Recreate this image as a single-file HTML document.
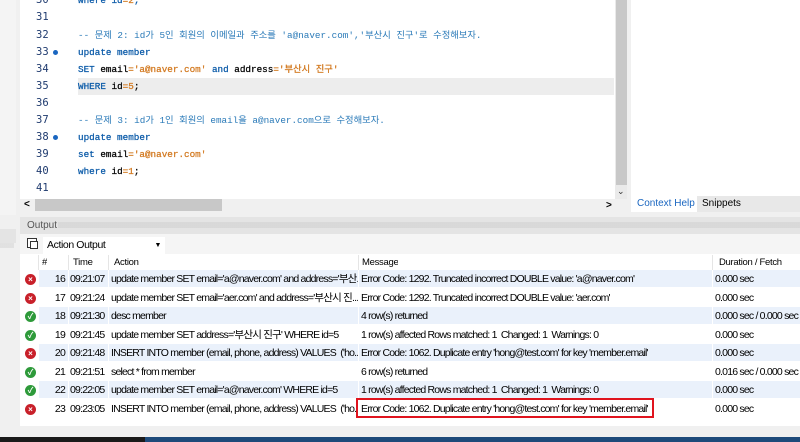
<!DOCTYPE html>
<html><head><meta charset="utf-8"><style>
*{margin:0;padding:0;box-sizing:border-box}
body{width:800px;height:442px;overflow:hidden;background:#f0f0f0;position:relative;font-family:"Liberation Sans","Noto Sans CJK KR",sans-serif;font-size:11px;color:#000}
.a{position:absolute}
.code{font-family:"Liberation Mono","Noto Sans CJK KR",monospace;font-size:9.3px;line-height:17px;height:17px;white-space:pre;-webkit-text-stroke:0.25px currentColor}
.ln{position:absolute;left:36px;color:#1e3a6e;font-family:"DejaVu Sans Mono",monospace;font-size:10.5px;line-height:17px}
.kw{color:#0a5aa8}.st{color:#d2781e}.cm{color:#2a7ab8;-webkit-text-stroke:0}
.dot{position:absolute;left:53px;width:5px;height:5px;border-radius:50%;background:#1a66c0}
.dots{background-image:radial-gradient(#bdbdbd 0.7px,transparent 0.8px);background-size:2px 2px}
.row{position:absolute;left:20px;width:780px;height:18px;font-size:10.5px;letter-spacing:-0.8px;line-height:18px;white-space:nowrap}
.row div{position:absolute;top:0;height:17px;overflow:hidden}
.c1{left:19px;width:29px;text-align:right;padding-right:3px}
.c2{left:49px;width:39px;padding-left:1px}
.c3{left:89px;width:249px;padding-left:2px}
.c4{left:339px;width:353px;padding-left:2px}
.c5{left:693px;width:87px;padding-left:2px}
.alt div.c1,.alt div.c2,.alt div.c3,.alt div.c4,.alt div.c5{background:#eaf1fb}
.ic{left:5px;top:4px!important;width:11px!important;height:11px!important;border-radius:50%;color:#fff;font-size:8px;line-height:11px!important;text-align:center;font-weight:bold;letter-spacing:0}
.e{background:#c8202a}.o{background:#2e9a3a}
</style></head><body>
<div class="a" style="left:0;top:0;width:16px;height:215px;background:#f4f4f4"></div>
<div class="a" style="left:20px;top:0;width:595px;height:199px;background:#fff"></div>
<div class="a" style="left:78px;top:78px;width:536px;height:17px;background:#ededed"></div>
<div class="a" style="left:615px;top:0;width:12px;height:199px;background:#eaeaea"></div>
<div class="a" style="left:616px;top:0;width:11px;height:185px;background:#c8c8c8"></div>
<div class="a" style="left:617px;top:186px;font-size:9px;color:#333">&#8964;</div>
<div class="a" style="left:20px;top:199px;width:608px;height:14px;background:#f0f0f0"></div>
<div class="a" style="left:35px;top:199px;width:187px;height:12px;background:#c8c8c8"></div>
<div class="a" style="left:24px;top:199px;font-size:10px;font-weight:bold">&lt;</div>
<div class="a" style="left:606px;top:200px;font-size:10px;font-weight:bold">&gt;</div>
<div class="a" style="left:631px;top:0;width:169px;height:196px;background:#fff"></div>
<div class="a" style="left:631px;top:196px;width:66px;height:16px;background:#fff;color:#1a66c0;font-size:10px;line-height:16px;padding-left:6px">Context Help</div>
<div class="a" style="left:697px;top:196px;width:103px;height:16px;background:#e8e8e8;font-size:10px;line-height:16px;padding-left:5px">Snippets</div>

<div class="ln" style="top:-8px">30</div><div class="a code kw" style="left:78px;top:-8px">where id<span class="st">=2</span>;</div>
<div class="ln" style="top:9px">31</div>
<div class="ln" style="top:27px">32</div><div class="a code cm" style="left:78px;top:27px">-- 문제 2: id가 5인 회원의 이메일과 주소를 'a@naver.com','부산시 진구'로 수정해보자.</div>
<div class="ln" style="top:44px">33</div><div class="dot" style="top:50px"></div><div class="a code kw" style="left:78px;top:44px">update member</div>
<div class="ln" style="top:61px">34</div><div class="a code" style="left:78px;top:61px"><span class="kw">SET</span> email<span class="st">='a@naver.com'</span> <span class="kw">and</span> address<span class="st">='부산시 진구'</span></div>
<div class="ln" style="top:78px">35</div><div class="a code" style="left:78px;top:78px"><span class="kw">WHERE</span> id<span class="st">=5</span>;</div>
<div class="ln" style="top:95px">36</div>
<div class="ln" style="top:112px">37</div><div class="a code cm" style="left:78px;top:112px">-- 문제 3: id가 1인 회원의 email을 a@naver.com으로 수정해보자.</div>
<div class="ln" style="top:129px">38</div><div class="dot" style="top:135px"></div><div class="a code kw" style="left:78px;top:129px">update member</div>
<div class="ln" style="top:146px">39</div><div class="a code" style="left:78px;top:146px"><span class="kw">set</span> email<span class="st">='a@naver.com'</span></div>
<div class="ln" style="top:163px">40</div><div class="a code" style="left:78px;top:163px"><span class="kw">where</span> id<span class="st">=1</span>;</div>
<div class="ln" style="top:180px">41</div>

<div class="a" style="left:0;top:215px;width:800px;height:222px;background:#f0f0f0"></div>
<div class="a" style="left:0;top:229px;width:16px;height:14px;background:#e4e4e4"></div>
<div class="a" style="left:20px;top:217px;width:780px;height:17px;background:#e4e4e4"></div>
<div class="a dots" style="left:58px;top:222px;width:742px;height:6px"></div>
<div class="a dots" style="left:0;top:243px;width:14px;height:5px"></div>
<div class="a" style="left:27px;top:217px;font-size:10px;line-height:17px;color:#555">Output</div>
<div class="a" style="left:20px;top:234px;width:780px;height:20px;background:#f5f5f5"></div>
<div class="a" style="left:27px;top:238px;width:10px;height:10px;border:1px solid #333;background:#fff"></div>
<div class="a" style="left:30px;top:241px;width:8px;height:8px;border:1px solid #333;background:#fff"></div>
<div class="a" style="left:43px;top:237px;width:122px;height:17px;background:#fff;font-size:10.5px;letter-spacing:-0.4px;line-height:17px;padding-left:4px">Action Output<span style="position:absolute;right:4px;font-size:7px">▼</span></div>
<div class="a" style="left:20px;top:254px;width:780px;height:172px;background:#fff"></div>
<div class="row" style="top:255px;font-size:9.5px;height:15px;line-height:15px;letter-spacing:-0.3px">
<div style="left:22px">#</div><div style="left:53px">Time</div><div style="left:94px">Action</div><div style="left:342px">Message</div><div style="left:699px">Duration / Fetch</div></div>
<div class="a" style="left:38px;top:255px;width:1px;height:15px;background:#e5e5e5"></div>
<div class="a" style="left:68px;top:255px;width:1px;height:15px;background:#e5e5e5"></div>
<div class="a" style="left:108px;top:255px;width:1px;height:15px;background:#e5e5e5"></div>
<div class="a" style="left:358px;top:255px;width:1px;height:15px;background:#e5e5e5"></div>
<div class="a" style="left:712px;top:255px;width:1px;height:15px;background:#e5e5e5"></div>

<div class="row alt" style="top:270px"><div class="ic e">×</div><div class="c1">16</div><div class="c2">09:21:07</div><div class="c3">update member SET email='a@naver.com' and address='부산...</div><div class="c4">Error Code: 1292. Truncated incorrect DOUBLE value: 'a@naver.com'</div><div class="c5">0.000 sec</div></div>
<div class="row" style="top:288.5px"><div class="ic e">×</div><div class="c1">17</div><div class="c2">09:21:24</div><div class="c3">update member SET email='aer.com' and address='부산시 진...</div><div class="c4">Error Code: 1292. Truncated incorrect DOUBLE value: 'aer.com'</div><div class="c5">0.000 sec</div></div>
<div class="row alt" style="top:307px"><div class="ic o">✓</div><div class="c1">18</div><div class="c2">09:21:30</div><div class="c3">desc member</div><div class="c4">4 row(s) returned</div><div class="c5">0.000 sec / 0.000 sec</div></div>
<div class="row" style="top:325.5px"><div class="ic o">✓</div><div class="c1">19</div><div class="c2">09:21:45</div><div class="c3">update member SET address='부산시 진구' WHERE id=5</div><div class="c4">1 row(s) affected Rows matched: 1&nbsp; Changed: 1&nbsp; Warnings: 0</div><div class="c5">0.000 sec</div></div>
<div class="row alt" style="top:344px"><div class="ic e">×</div><div class="c1">20</div><div class="c2">09:21:48</div><div class="c3">INSERT INTO member (email, phone, address) VALUES&nbsp; ('ho...</div><div class="c4">Error Code: 1062. Duplicate entry 'hong@test.com' for key 'member.email'</div><div class="c5">0.000 sec</div></div>
<div class="row" style="top:362.5px"><div class="ic o">✓</div><div class="c1">21</div><div class="c2">09:21:51</div><div class="c3">select * from member</div><div class="c4">6 row(s) returned</div><div class="c5">0.016 sec / 0.000 sec</div></div>
<div class="row alt" style="top:381px"><div class="ic o">✓</div><div class="c1">22</div><div class="c2">09:22:05</div><div class="c3">update member SET email='a@naver.com' WHERE id=5</div><div class="c4">1 row(s) affected Rows matched: 1&nbsp; Changed: 1&nbsp; Warnings: 0</div><div class="c5">0.000 sec</div></div>
<div class="row" style="top:399.5px"><div class="ic e">×</div><div class="c1">23</div><div class="c2">09:23:05</div><div class="c3">INSERT INTO member (email, phone, address) VALUES&nbsp; ('ho...</div><div class="c4">Error Code: 1062. Duplicate entry 'hong@test.com' for key 'member.email'</div><div class="c5">0.000 sec</div></div>
<div class="a" style="left:356px;top:398px;width:298px;height:20px;border:2px solid #e0141e"></div>
<div class="a" style="left:0;top:437px;width:145px;height:5px;background:#1a1a1a"></div>
<div class="a" style="left:145px;top:437px;width:655px;height:5px;background:#1e4a7a"></div>
</body></html>
